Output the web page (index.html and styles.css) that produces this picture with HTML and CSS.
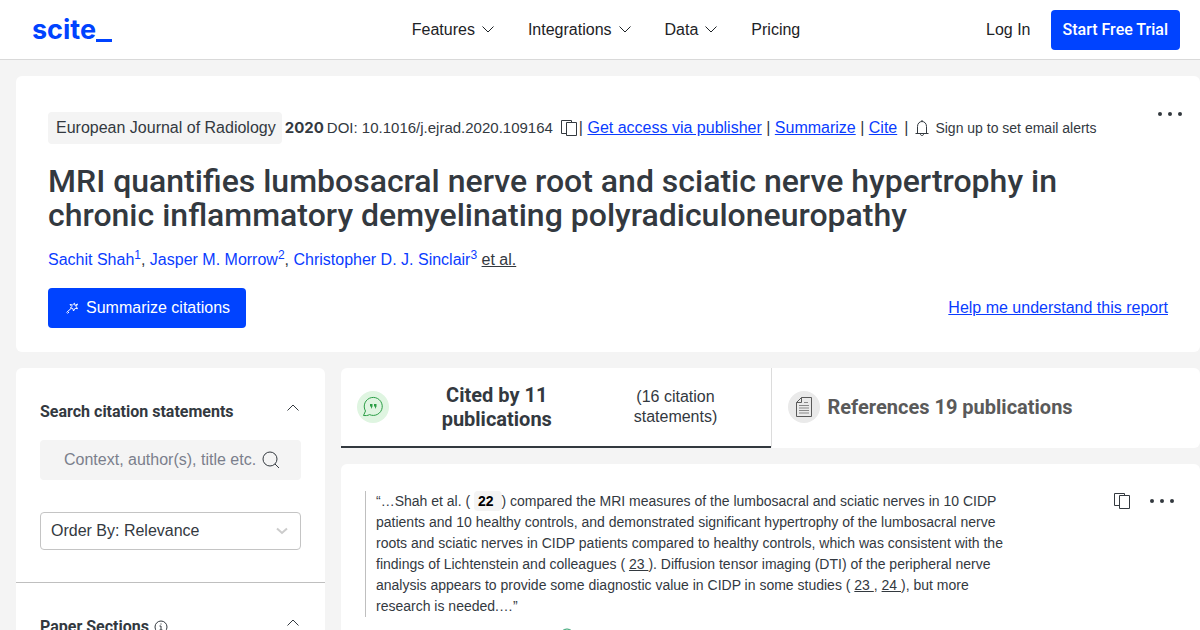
FILE: index.html
```html
<!DOCTYPE html>
<html lang="en">

<head>
    <meta charset="UTF-8">
    <meta name="viewport" content="width=device-width, initial-scale=1.0">
    <title>MRI quantifies lumbosacral nerve root and sciatic nerve hypertrophy - scite</title>
    <link rel="stylesheet" href="styles.css">
</head>

<body>
    <header class="header">
        <div class="header-side">
            <a href="#" class="logo">scite<span class="logo-line"></span></a>
        </div>
        <nav class="nav">
            <button class="nav-item">Features
                <svg class="chevron" viewBox="0 0 12 7"><path d="M0.5 0.5 6 6 11.5 0.5" /></svg>
            </button>
            <button class="nav-item">Integrations
                <svg class="chevron" viewBox="0 0 12 7"><path d="M0.5 0.5 6 6 11.5 0.5" /></svg>
            </button>
            <button class="nav-item">Data
                <svg class="chevron" viewBox="0 0 12 7"><path d="M0.5 0.5 6 6 11.5 0.5" /></svg>
            </button>
            <a href="#" class="nav-item">Pricing</a>
        </nav>
        <div class="header-side header-actions">
            <a href="#" class="login">Log In</a>
            <a href="#" class="btn btn-trial">Start Free Trial</a>
        </div>
    </header>

    <main class="page">
        <section class="card paper">
            <button class="dots paper-menu" aria-label="More options">
                <svg viewBox="0 0 24 4"><circle cx="2" cy="2" r="2" /><circle cx="12" cy="2" r="2" /><circle cx="22" cy="2" r="2" /></svg>
            </button>
            <div class="meta">
                <span class="journal">European Journal of Radiology</span>
                <strong class="year">2020</strong>
                <span class="doi">DOI: 10.1016/j.ejrad.2020.109164</span>
                <button class="copy" aria-label="Copy DOI">
                    <svg viewBox="0 0 16 16"><path d="M5 13.5H0.5V0.5h10v2M5.5 2.5h10v13h-10z" /></svg>
                </button>
                <span class="links">| <a href="#">Get access via publisher</a> | <a href="#">Summarize</a> | <a href="#">Cite</a></span>
                <span class="bar">|</span>
                <button class="alerts">
                    <svg viewBox="0 0 14 16"><path d="M7 0v1.5M0.5 13.5h13M2.5 13.500V6.500C2.500 3.500 4.500 1.500 7 1.500s4.500 2 4.500 5v7M5.500 14c0 2.200 3 2.200 3 0" /></svg>
                    Sign up to set email alerts
                </button>
            </div>
            <h1 class="title">MRI quantifies lumbosacral nerve root and sciatic nerve hypertrophy in chronic inflammatory demyelinating polyradiculoneuropathy</h1>
            <p class="authors"><a href="#">Sachit Shah<sup>1</sup></a>, <a href="#">Jasper M. Morrow<sup>2</sup></a>, <a href="#">Christopher D. J. Sinclair<sup>3</sup></a> <a href="#" class="et-al">et al.</a></p>
            <div class="paper-actions">
                <button class="btn btn-summarize">
                    <svg class="wand" viewBox="0 0 12 12"><path d="M0.5 10.5 5 6.500M1.500 11.500 3 10M4 2.500l2.500.5L8.500 1.200 9 3.500 11.500 2 10.200 4.500l1.300 2.200-2.500-.4L7.500 9 6.800 6.500 4.500 6l1.300-1.500z" /></svg>
                    Summarize citations
                </button>
                <a href="#">Help me understand this report</a>
            </div>
        </section>

        <div class="columns">
            <aside class="card sidebar">
                <section class="filter">
                    <div class="filter-head">
                        <h2>Search citation statements</h2>
                        <button class="toggle" aria-label="Collapse search">
                            <svg class="chevron" viewBox="0 0 12 7"><path d="M0.5 6.5 6 1l5.500 5.500" /></svg>
                        </button>
                    </div>
                    <label class="search">
                        <input type="text" placeholder="Context, author(s), title etc." aria-label="Search citation statements">
                        <svg viewBox="0 0 18 18"><circle cx="8" cy="8" r="7" /><path d="m13 13 4 4" /></svg>
                    </label>
                    <div class="order">
                        <select aria-label="Order by">
                            <option>Order By: Relevance</option>
                            <option>Order By: Date</option>
                        </select>
                        <svg viewBox="0 0 12 8"><path d="m1 1.5 5 4.5 5-4.5" /></svg>
                    </div>
                </section>
                <section class="filter">
                    <div class="filter-head">
                        <h2>Paper Sections
                            <svg class="info" viewBox="0 0 14 14"><circle cx="7" cy="7" r="6" /><path d="M5.5 6H7v4M5.5 10h3M7 3.5v1" /></svg>
                        </h2>
                        <button class="toggle" aria-label="Collapse paper sections">
                            <svg class="chevron" viewBox="0 0 12 7"><path d="M0.5 6.5 6 1l5.500 5.500" /></svg>
                        </button>
                    </div>
                </section>
            </aside>

            <div class="content">
                <div class="card tabs">
                    <button class="tab active">
                        <svg class="tab-icon cited" viewBox="0 0 32 32">
                            <circle class="disc" cx="16" cy="16" r="16" />
                            <path d="M6.500 24.500 8.500 20A9 9 0 1 1 12.500 23.600C10.500 24.800 8.500 24.600 6.500 24.500z" />
                            <path class="marks" d="M13 13h2.500v2.500L14 18v-2.500h-1zM17 13h2.500v2.500L18 18v-2.500h-1z" />
                        </svg>
                        <strong>Cited by 11 publications</strong>
                        <span class="count">(16 citation statements)</span>
                    </button>
                    <button class="tab">
                        <svg class="tab-icon refs" viewBox="0 0 32 32">
                            <circle class="disc" cx="16" cy="16" r="16" />
                            <path d="M13.5 6.5h10v19h-15v-14zM13.5 6.5v5h-5" />
                            <path class="lines" d="M16 11.5h4M11 14.5h10M11 17h10M11 19.5h10M11 22h10" />
                        </svg>
                        <strong>References 19 publications</strong>
                    </button>
                </div>

                <article class="card statement">
                    <div class="statement-body">
                        <blockquote>“…Shah et al. ( <mark>22 </mark>) compared the MRI measures of the lumbosacral and sciatic nerves in 10 CIDP patients and 10 healthy controls, and demonstrated significant hypertrophy of the lumbosacral nerve roots and sciatic nerves in CIDP patients compared to healthy controls, which was consistent with the findings of Lichtenstein and colleagues ( <a href="#">23 </a>). Diffusion tensor imaging (DTI) of the peripheral nerve analysis appears to provide some diagnostic value in CIDP in some studies ( <a href="#">23 </a>, <a href="#">24 </a>), but more research is needed.…”</blockquote>
                        <svg class="support" viewBox="0 0 16 16"><circle cx="8" cy="8" r="7" /></svg>
                    </div>
                    <div class="statement-tools">
                        <button class="copy" aria-label="Copy statement">
                            <svg viewBox="0 0 16 16"><path d="M5 12.5H0.5V0.5h10v2M5.5 2.5h10v13h-10z" /></svg>
                        </button>
                        <button class="dots" aria-label="More options">
                            <svg viewBox="0 0 24 4"><circle cx="2" cy="2" r="2" /><circle cx="12" cy="2" r="2" /><circle cx="22" cy="2" r="2" /></svg>
                        </button>
                    </div>
                </article>
            </div>
        </div>
    </main>
</body>

</html>
```
FILE: styles.css
```css
* {
    box-sizing: border-box;
}

body {
    margin: 0;
    height: 100vh;
    overflow: hidden;
    background: #f4f4f4;
    color: #33393f;
    font-family: "Liberation Sans", Arial, sans-serif;
    font-size: 16px;
    line-height: 24px;
}

a {
    color: #0a3cff;
}

button {
    padding: 0;
    border: none;
    background: none;
    color: inherit;
    font: inherit;
    cursor: pointer;
}

svg {
    display: block;
    flex: none;
    fill: none;
    stroke: currentColor;
}

h1,
h2,
p,
blockquote {
    margin: 0;
}

/* Header */
.header {
    display: flex;
    align-items: center;
    height: 60px;
    padding: 0 20px 0 32px;
    background: #fff;
    border-bottom: 1px solid #d9d9d9;
    color: #1d2226;
}

.header-side {
    flex: 1;
    display: flex;
    align-items: center;
}

.header-actions {
    justify-content: flex-end;
    gap: 20px;
}

.logo {
    display: flex;
    align-items: flex-end;
    color: #0043ff;
    font-family: Inter, sans-serif;
    font-size: 27px;
    font-weight: 700;
    text-decoration: none;
}

.logo-line {
    width: 16px;
    height: 3px;
    background: #0043ff;
}

.nav {
    display: flex;
    gap: 34px;
}

.nav-item {
    display: flex;
    align-items: center;
    gap: 7px;
    color: inherit;
    text-decoration: none;
}

.chevron {
    width: 12px;
    height: 7px;
}

.login {
    color: inherit;
    text-decoration: none;
}

.btn {
    display: flex;
    align-items: center;
    height: 40px;
    border-radius: 4px;
    background: #0043ff;
    color: #fff;
    text-decoration: none;
}

.btn-trial {
    padding: 0 12px;
    font-family: Roboto, sans-serif;
    font-weight: 500;
}

/* Paper */
.page {
    display: flex;
    flex-direction: column;
    gap: 16px;
    padding: 16px 0 0 16px;
}

.card {
    border-radius: 6px;
    background: #fff;
}

.paper {
    position: relative;
    padding: 36px 32px 24px;
}

.paper-menu {
    position: absolute;
    top: 36px;
    right: 18px;
}

.dots svg {
    width: 24px;
    height: 4px;
    fill: currentColor;
    stroke: none;
}

.meta {
    display: flex;
    align-items: center;
    white-space: nowrap;
}

.journal {
    padding: 4px 6px 4px 8px;
    border-radius: 4px;
    background: #f4f4f4;
}

.year {
    margin: 0 3px;
    font-family: Inter, sans-serif;
    font-size: 15px;
}

.doi {
    font-size: 15px;
}

.copy svg {
    width: 16px;
    height: 16px;
}

.meta .copy {
    margin: 0 2px 0 8px;
}

.bar {
    margin: 0 7px;
}

.alerts {
    display: flex;
    align-items: center;
    gap: 6px;
    font-size: 14px;
}

.alerts svg {
    width: 14px;
    height: 16px;
}

.title {
    margin-top: 20px;
    font-family: Roboto, sans-serif;
    font-size: 32px;
    font-weight: 500;
    line-height: 34px;
}

.authors {
    margin-top: 16px;
}

.authors a {
    text-decoration: none;
}

.authors sup {
    font-size: 12px;
    line-height: 0;
}

.authors .et-al {
    color: inherit;
    text-decoration: underline;
}

.paper-actions {
    display: flex;
    align-items: center;
    justify-content: space-between;
    margin-top: 16px;
}

.btn-summarize {
    gap: 8px;
    padding: 0 16px 0 18px;
}

.wand {
    width: 12px;
    height: 12px;
}

/* Sidebar */
.columns {
    display: flex;
    gap: 16px;
}

.sidebar {
    flex: none;
    width: 309px;
}

.filter {
    padding: 32px 24px;
}

.filter + .filter {
    border-top: 1px solid #bfbfbf;
}

.filter-head {
    display: flex;
    justify-content: space-between;
}

.filter h2 {
    display: flex;
    align-items: center;
    gap: 5px;
    font-family: Roboto, sans-serif;
    font-size: 16px;
    font-weight: 700;
    line-height: 24px;
}

.info {
    width: 14px;
    height: 14px;
}

.toggle {
    align-self: flex-start;
    padding: 4px 2px;
}

.search {
    display: flex;
    align-items: center;
    height: 40px;
    margin: 16px 0 32px;
    padding: 0 21px 0 24px;
    border-radius: 4px;
    background: #f4f4f4;
}

.search input {
    flex: 1;
    min-width: 0;
    padding: 0;
    border: none;
    outline: none;
    background: none;
    color: inherit;
    font: inherit;
}

.search input::placeholder {
    color: #7b7f8c;
}

.search svg {
    width: 18px;
    height: 18px;
}

.order {
    display: grid;
    align-items: center;
}

.order select,
.order svg {
    grid-area: 1 / 1;
}

.order select {
    height: 38px;
    padding: 0 10px;
    border: 1px solid #c4c4c4;
    border-radius: 4px;
    background: #fff;
    color: inherit;
    font: inherit;
    appearance: none;
}

.order svg {
    justify-self: end;
    width: 12px;
    height: 8px;
    margin-right: 13px;
    stroke: #ccc;
    stroke-width: 2;
    pointer-events: none;
}

/* Tabs */
.content {
    flex: 1;
    min-width: 0;
    display: flex;
    flex-direction: column;
    gap: 16px;
}

.tabs {
    display: grid;
    grid-template-columns: 1fr 1fr;
    height: 80px;
}

.tab {
    display: flex;
    align-items: center;
    padding: 0 16px;
    border-bottom: 2px solid transparent;
    color: #5a5a5a;
}

.tab.active {
    border-bottom-color: #33393f;
    color: inherit;
}

.tab + .tab {
    gap: 8px;
    border-left: 1px solid #dcdcdc;
}

.tab strong {
    font-family: Roboto, sans-serif;
    font-size: 20px;
    font-weight: 700;
}

.tab.active strong {
    flex: 1;
    margin-left: 8px;
    padding: 0 40px;
}

.count {
    width: 158px;
    padding: 0 32px;
    line-height: 20px;
}

.tab-icon {
    width: 32px;
    height: 32px;
}

.disc {
    stroke: none;
}

.cited {
    color: #2a9d45;
}

.cited .disc {
    fill: #dff5e1;
}

.marks {
    fill: currentColor;
    stroke: none;
}

.refs .disc {
    fill: #eaeaea;
}

.lines {
    stroke: #888;
}

/* Citation statement */
.statement {
    display: flex;
    justify-content: space-between;
    padding: 27px 26px 27px 24px;
}

.statement-body {
    width: 648px;
}

blockquote {
    padding-left: 10px;
    border-left: 1px solid #bfbfbf;
    font-size: 14px;
    line-height: 21px;
}

blockquote a {
    color: inherit;
}

mark {
    padding: 2px 4px;
    border-radius: 4px;
    background: #f4f4f4;
    color: #000;
    font-weight: 700;
}

.support {
    width: 16px;
    height: 16px;
    margin: 11px 0 0 194px;
    stroke: #2a9d6a;
}

.statement-tools {
    display: flex;
    align-items: center;
    align-self: flex-start;
    gap: 20px;
    padding-top: 2px;
}
```
